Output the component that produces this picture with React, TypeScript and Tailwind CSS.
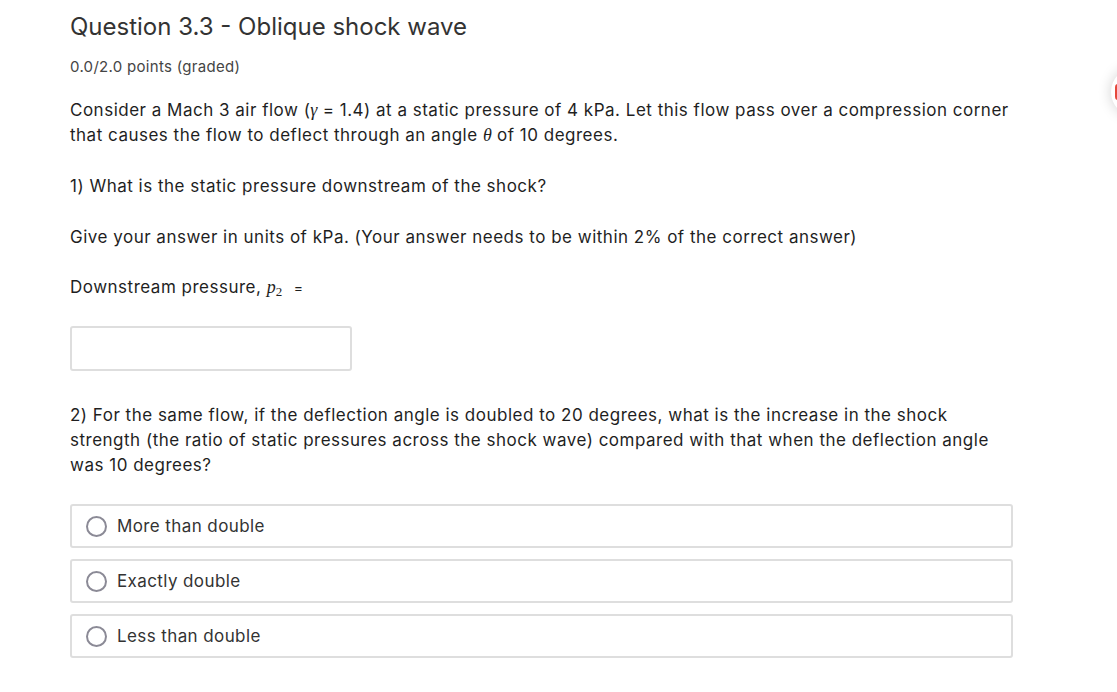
import { useState } from "react";

const options = ["More than double", "Exactly double", "Less than double"];

const M = ({ children }: { children: React.ReactNode }) => (
  <span className="font-['Liberation_Serif',serif] italic text-[18px] leading-none tracking-normal">{children}</span>
);

export default function App() {
  const [picked, setPicked] = useState<number | null>(null);

  return (
    <div className="relative min-h-[692px] w-full overflow-hidden bg-white font-['Inter',sans-serif] text-[#1f1f1f]">
      {/* floating widget peeking from the right edge */}
      <div className="absolute right-[-42px] top-[68px] h-[48px] w-[48px] rounded-full bg-white shadow-[0_0_14px_rgba(0,0,0,0.18)]">
        <div className="absolute left-[4px] top-[16px] h-[16px] w-[6px] rounded-sm bg-[#e5483b]" />
      </div>

      <div className="pl-[70px] pt-[11px]">
        <h2 className="text-[24px] leading-[32px] text-[#333333]">Question 3.3 - Oblique shock wave</h2>
        <div className="mt-[15px] text-[15px] leading-[18px] tracking-[0.3px] text-[#454545]">0.0/2.0 points (graded)</div>

        <div className="mt-[22px] w-[943px] text-[17px] leading-[25px] tracking-[0.5px]">
          <p>
            Consider a Mach 3 air flow (<M>γ</M> = 1.4) at a static pressure of 4 kPa. Let this flow pass over a compression corner that causes the flow to deflect through an angle <M>θ</M> of 10 degrees.
          </p>
          <p className="mt-[26px]">1) What is the static pressure downstream of the shock?</p>
          <p className="mt-[26px]">Give your answer in units of kPa. (Your answer needs to be within 2% of the correct answer)</p>
          <p className="mt-[25px]">
            Downstream pressure, <M>p</M>
            <span className="font-['Liberation_Serif',serif] text-[13px] leading-none align-[-3px]">2</span>
            <span className="ml-[11px] text-[14px]">=</span>
          </p>

          <input
            type="text"
            className="mt-[26px] block h-[45px] w-[282px] rounded-[3px] border-2 border-[#dedede] bg-white px-2 outline-none"
          />

          <p className="mt-[32px]">
            2) For the same flow, if the deflection angle is doubled to 20 degrees, what is the increase in the shock strength (the ratio of static pressures across the shock wave) compared with that when the deflection angle was 10 degrees?
          </p>

          <div className="mt-[26px] flex w-[943px] flex-col gap-[11px] tracking-[0.4px]">
            {options.map((o, i) => (
              <label
                key={o}
                onClick={() => setPicked(i)}
                className="flex h-[44px] cursor-pointer items-center rounded-[3px] border-2 border-[#dedede] pl-[14px]"
              >
                <span className="flex h-[21px] w-[21px] items-center justify-center rounded-full border-2 border-[#8b8a96]">
                  {picked === i && <span className="h-[11px] w-[11px] rounded-full bg-[#8b8a96]" />}
                </span>
                <span className="ml-[10px] text-[17px] text-[#333333]">{o}</span>
              </label>
            ))}
          </div>
        </div>
      </div>
    </div>
  );
}
